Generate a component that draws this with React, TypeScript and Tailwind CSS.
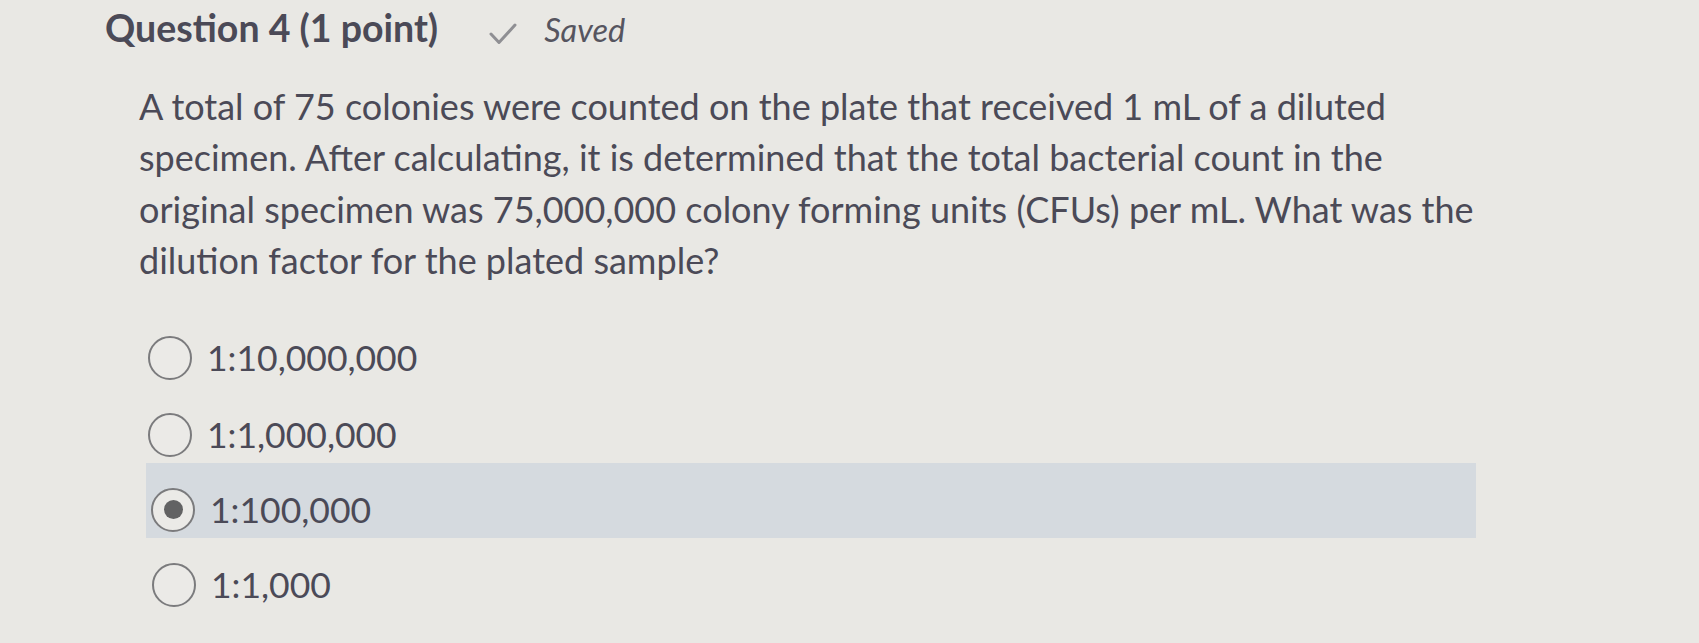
import React from "react";

const Radio = ({ checked }: { checked?: boolean }) => (
  <div className="w-[44px] h-[44px] shrink-0 rounded-full border-[2.5px] border-[#7b7b7d] bg-[#ebeae7] flex items-center justify-center">
    {checked && <div className="w-[19px] h-[19px] rounded-full bg-[#626263]" />}
  </div>
);

export default function App() {
  const opts = ["1:10,000,000", "1:1,000,000", "1:100,000", "1:1,000"];
  return (
    <div className="w-[1699px] h-[643px] bg-[#e9e8e4] overflow-hidden text-[#4b4a57]" style={{ fontFamily: "Lato, 'Noto Sans', sans-serif" }}>
      <div className="pl-[105px] pt-[4px] flex items-baseline">
        <h1 className="text-[37.5px] font-bold leading-[48px]">Question 4 (1 point)</h1>
        <div className="ml-[51px] flex items-baseline text-[#56555f]">
          <svg width="28" height="22" viewBox="0 0 28 22" className="self-center mt-[8px]">
            <path d="M2 11 L10 19.5 L26 2" fill="none" stroke="#8f8f93" strokeWidth="3" strokeLinecap="round" strokeLinejoin="round" />
          </svg>
          <span className="ml-[27px] italic text-[32.5px]">Saved</span>
        </div>
      </div>
      <p className="ml-[139px] mt-[26px] text-[36px] leading-[51.5px]">
        A total of 75 colonies were counted on the plate that received 1 mL of a diluted
        <br />
        specimen. After calculating, it is determined that the total bacterial count in the
        <br />
        original specimen was 75,000,000 colony forming units (CFUs) per mL. What was the
        <br />
        dilution factor for the plated sample?
      </p>
      <div className="ml-[146px] w-[1330px] mt-[49px] flex flex-col">
        {opts.map((o, i) => (
          <div
            key={o}
            className={
              i === 0
                ? "flex items-center h-[44px] pl-[2px]"
                : i === 1
                ? "flex items-center h-[44px] pl-[2px] mt-[33px]"
                : i === 2
                ? "flex items-center h-[44px] pl-[5px] mt-[6px] pt-[25px] pb-[6px] box-content bg-[#d5dadf]"
                : "flex items-center h-[44px] pl-[6px] mt-[25px]"
            }
          >
            <Radio checked={i === 2} />
            <span className="ml-[15px] text-[35.5px]">{o}</span>
          </div>
        ))}
      </div>
    </div>
  );
}
